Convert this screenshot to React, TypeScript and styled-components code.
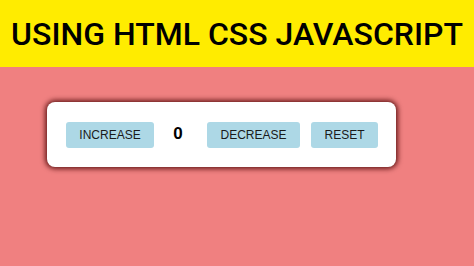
import React, { useState } from 'react';
import styled, { createGlobalStyle } from 'styled-components';

const Global = createGlobalStyle`
  html, body {
    margin: 0;
    padding: 0;
    width: 474px;
    height: 266px;
    overflow: hidden;
    background: #f08080;
  }
`;

const Page = styled.div`
  width: 474px;
  height: 266px;
  display: flex;
  flex-direction: column;
`;

const Banner = styled.h1`
  margin: 0;
  height: 67px;
  background: #ffec00;
  display: flex;
  align-items: center;
  justify-content: center;
  font-family: Roboto, "Liberation Sans", sans-serif;
  font-weight: 500;
  font-size: 32px;
  color: #000;
`;

const Body = styled.div`
  flex: 1;
  padding: 35px 0 0 47px;
`;

const Card = styled.div`
  width: 349px;
  height: 65px;
  box-sizing: border-box;
  background: #fff;
  border-radius: 8px;
  box-shadow: 0 0 5px 2px rgba(70, 0, 0, 0.8);
  display: flex;
  align-items: center;
  padding: 0 18px 0 19px;
`;

const Button = styled.button<{ $w: number }>`
  width: ${p => p.$w}px;
  height: 26px;
  border: none;
  border-radius: 3px;
  background: #add8e6;
  color: #1a1a1a;
  font-family: "Liberation Sans", Arial, sans-serif;
  font-size: 12px;
  padding: 0;
  cursor: pointer;
`;

const Count = styled.span`
  width: 53px;
  box-sizing: border-box;
  padding-right: 5px;
  text-align: center;
  font-family: "Liberation Sans", Arial, sans-serif;
  font-weight: 700;
  font-size: 17px;
  color: #000;
  margin-bottom: 2px;
`;

const Spacer = styled.div`
  width: 11px;
`;

export default function App() {
  const [count, setCount] = useState(0);
  return (
    <>
      <Global />
      <Page>
        <Banner>USING HTML CSS JAVASCRIPT</Banner>
        <Body>
          <Card>
            <Button $w={88} onClick={() => setCount(count + 1)}>INCREASE</Button>
            <Count>{count}</Count>
            <Button $w={93} onClick={() => setCount(count - 1)}>DECREASE</Button>
            <Spacer />
            <Button $w={67} onClick={() => setCount(0)}>RESET</Button>
          </Card>
        </Body>
      </Page>
    </>
  );
}
